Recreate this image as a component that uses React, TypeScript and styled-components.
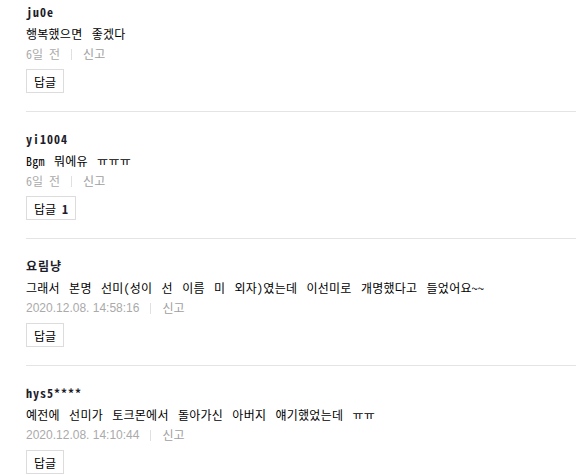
import React from "react";
import styled, { createGlobalStyle } from "styled-components";

const Global = createGlobalStyle`
  html, body { margin: 0; padding: 0; background: #fff; }
  body { font-family: "Noto Sans Mono CJK KR", "Noto Sans CJK KR", sans-serif; font-size: 12px; }
`;

const List = styled.ul`
  list-style: none;
  margin: 0;
  padding: 0 0 0 26px;
`;

const Item = styled.li`
  padding: 18px 0 18px 0;
  border-bottom: 1px solid #e4e4e4;
  &:first-child { padding-top: 3px; }
`;

const Author = styled.div`
  height: 18px;
  line-height: 18px;
  font-weight: bold;
  color: #1c1c2a;
  letter-spacing: 1px;
`;

const Body = styled.p`
  margin: 4px 0 0;
  height: 18px;
  line-height: 18px;
  color: #000;
  white-space: nowrap;
  letter-spacing: 0.25px;
  word-spacing: 3px;
`;

const Meta = styled.div`
  margin-top: 2px;
  height: 18px;
  line-height: 18px;
  display: flex;
  align-items: center;
  color: #a0a0a0;
`;

const DateText = styled.span<{ $num?: boolean }>`
  font-family: ${(p) => (p.$num ? '"Liberation Sans", Arial, sans-serif' : "inherit")};
  color: #aaa;
`;

const Bar = styled.span`
  width: 1px;
  height: 11px;
  background: #e0e0e0;
  margin: 0 11px;
`;

const Report = styled.span`
  color: #a0a0a0;
`;

const ReplyButton = styled.button`
  margin-top: 6px;
  display: inline-flex;
  align-items: center;
  height: 24px;
  padding: 0 7px;
  border: 1px solid #dcdcdc;
  background: #fff;
  font-family: inherit;
  font-size: 12px;
  color: #000;
  cursor: pointer;
`;

const Count = styled.b`
  margin-left: 6px;
  color: #1c1c2a;
`;

type C = { author: string; text: string; date: string; numeric?: boolean; replies?: number };

const comments: C[] = [
  { author: "ju0e", text: "행복했으면 좋겠다", date: "6일 전" },
  { author: "yi1004", text: "Bgm 뭐에유 ㅠㅠㅠ", date: "6일 전", replies: 1 },
  { author: "요림냥", text: "그래서 본명 선미(성이 선 이름 미 외자)였는데 이선미로 개명했다고 들었어요~~", date: "2020.12.08. 14:58:16", numeric: true },
  { author: "hys5****", text: "예전에 선미가 토크몬에서 돌아가신 아버지 얘기했었는데 ㅠㅠ", date: "2020.12.08. 14:10:44", numeric: true },
];

export default function App() {
  return (
    <>
      <Global />
      <List>
        {comments.map((c, i) => (
          <Item key={i}>
            <Author>{c.author}</Author>
            <Body>{c.text}</Body>
            <Meta>
              <DateText $num={c.numeric}>{c.date}</DateText>
              <Bar />
              <Report>신고</Report>
            </Meta>
            <ReplyButton>
              답글
              {c.replies ? <Count>{c.replies}</Count> : null}
            </ReplyButton>
          </Item>
        ))}
      </List>
    </>
  );
}
